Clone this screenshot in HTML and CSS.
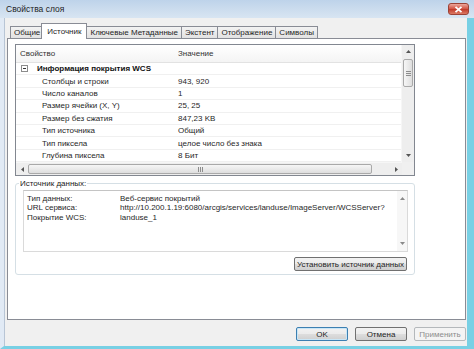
FILE: index.html
```html
<!DOCTYPE html>
<html>
<head>
  <title>Свойства слоя</title>
  <link rel="stylesheet" href="styles.css">
</head>
<body>
  <div class="window">
    <div class="titlebar">
      <span class="title">Свойства слоя</span>
      <span class="close">
        <svg width="9" height="7" viewBox="0 0 9 7"><path d="M1.5 0.8 L7.5 6.2 M7.5 0.8 L1.5 6.2" stroke="#fff" stroke-width="1.8"/></svg>
      </span>
    </div>
    <div class="frame">
      <div class="tabs">
        <div class="tab">Общие</div>
        <div class="tab active">Источник</div>
        <div class="tab">Ключевые Метаданные</div>
        <div class="tab">Экстент</div>
        <div class="tab">Отображение</div>
        <div class="tab">Символы</div>
      </div>

      <div class="panel">
        <div class="grid">
          <div class="grid-main">
            <div class="grid-view">
              <div class="grid-head">
                <span class="c1">Свойство</span>
                <span class="c2">Значение</span>
              </div>
              <div class="row group">
                <svg class="toggle" width="7" height="7" viewBox="0 0 7 7"><rect x="0.5" y="0.5" width="6" height="6" fill="#fff" stroke="#8c8c8c"/><path d="M2 3.5 H5" stroke="#333"/></svg>
                <span>Информация покрытия WCS</span>
              </div>
              <div class="row"><span class="c1">Столбцы и строки</span><span class="c2">943, 920</span></div>
              <div class="row"><span class="c1">Число каналов</span><span class="c2">1</span></div>
              <div class="row"><span class="c1">Размер ячейки (X, Y)</span><span class="c2">25, 25</span></div>
              <div class="row"><span class="c1">Размер без сжатия</span><span class="c2">847,23 KB</span></div>
              <div class="row"><span class="c1">Тип источника</span><span class="c2">Общий</span></div>
              <div class="row"><span class="c1">Тип пиксела</span><span class="c2">целое число без знака</span></div>
              <div class="row"><span class="c1">Глубина пиксела</span><span class="c2">8 Бит</span></div>
            </div>
            <div class="vscroll">
              <div class="sb-btn"><svg width="5" height="3" viewBox="0 0 5 3"><path d="M0 3 L2.5 0 L5 3Z" fill="#555"/></svg></div>
              <div class="thumb-v"><span class="grip-v"></span></div>
              <div class="sb-track"></div>
              <div class="sb-btn"><svg width="5" height="3" viewBox="0 0 5 3"><path d="M0 0 L2.5 3 L5 0Z" fill="#555"/></svg></div>
            </div>
          </div>
          <div class="hscroll-row">
            <div class="hscroll">
              <div class="sb-btn-h"><svg width="3" height="5" viewBox="0 0 3 5"><path d="M3 0 L0 2.5 L3 5Z" fill="#555"/></svg></div>
              <div class="thumb-h"><span class="grip-h"></span></div>
              <div class="sb-track"></div>
              <div class="sb-btn-h"><svg width="3" height="5" viewBox="0 0 3 5"><path d="M0 0 L3 2.5 L0 5Z" fill="#555"/></svg></div>
            </div>
            <div class="corner"></div>
          </div>
        </div>

        <fieldset class="source">
          <legend>Источник данных:</legend>
          <div class="info">
            <div class="info-lines">
              <div class="line"><span class="k">Тип данных:</span><span>Веб-сервис покрытий</span></div>
              <div class="line"><span class="k">URL сервиса:</span><span>http://10.200.1.19:6080/arcgis/services/landuse/ImageServer/WCSServer?</span></div>
              <div class="line"><span class="k">Покрытие WCS:</span><span>landuse_1</span></div>
            </div>
            <div class="info-scroll">
              <svg width="5" height="3" viewBox="0 0 5 3"><path d="M0 3 L2.5 0 L5 3Z" fill="#8a8a8a"/></svg>
              <svg width="5" height="3" viewBox="0 0 5 3"><path d="M0 0 L2.5 3 L5 0Z" fill="#8a8a8a"/></svg>
            </div>
          </div>
          <div class="source-actions">
            <button class="btn">Установить источник данных</button>
          </div>
        </fieldset>
      </div>

      <div class="dialog-buttons">
        <button class="btn default">OK</button>
        <button class="btn">Отмена</button>
        <button class="btn" disabled>Применить</button>
      </div>
    </div>
  </div>
</body>
</html>
```

FILE: styles.css
```css
body {
  margin: 0;
  font-family: "Liberation Sans", Arial, sans-serif;
  font-size: 8px;
  color: #1f1f1f;
}
.window {
  width: 474px;
  height: 349px;
  display: flex;
  flex-direction: column;
  background: #dce7f3;
}
.titlebar {
  height: 18px;
  flex: none;
  display: flex;
  align-items: center;
  justify-content: space-between;
  padding: 0 5px 0 6px;
  background: linear-gradient(#bed3ea, #d8e5f2);
}
.title {
  font-size: 8.5px;
  color: #1e1e1e;
}
.close {
  width: 21px;
  height: 12px;
  box-sizing: border-box;
  border: 1px solid #9c4236;
  border-radius: 3px;
  background: linear-gradient(#eca79c, #d35a4b 45%, #c23d2d 55%, #dc7a64);
  display: flex;
  align-items: center;
  justify-content: center;
}
.frame {
  flex: 1;
  display: flex;
  flex-direction: column;
  border-left: 4px solid #e1eaf5;
  border-right: 7px solid #78d0e4;
  border-bottom: 3px solid #78d0e4;
  background: #f0f0f0;
  box-shadow: inset 1px 0 #b8c5d5;
}

/* tabs */
.tabs {
  height: 20px;
  flex: none;
  display: flex;
  align-items: flex-end;
  padding-left: 6px;
}
.tab {
  height: 12px;
  box-sizing: border-box;
  padding: 0 3px;
  border: 1px solid #898c95;
  border-bottom: none;
  margin-right: -1px;
  background: linear-gradient(#f3f3f3, #e2e2e2);
  line-height: 11px;
  white-space: nowrap;
}
.tab.active {
  height: 16px;
  margin: 0 -1px -1px -2px;
  padding: 0 5px;
  background: #fff;
  line-height: 15px;
  position: relative;
  z-index: 1;
}

.panel {
  flex: none;
  height: 282px;
  box-sizing: border-box;
  margin: 0 1px 0 3px;
  border: 1px solid #898c95;
  background: #fff;
  padding: 5px 0 0 7px;
}

/* property grid */
.grid {
  width: 400px;
  height: 132px;
  box-sizing: border-box;
  border: 1px solid #828790;
  display: flex;
  flex-direction: column;
}
.grid-main {
  flex: 1;
  display: flex;
  min-height: 0;
}
.grid-view {
  flex: 1;
  overflow: hidden;
}
.grid-head {
  height: 18px;
  box-sizing: border-box;
  display: flex;
  align-items: center;
  background: linear-gradient(#ffffff, #f4f4f4);
  border-bottom: 1px solid #e2e2e2;
  color: #333;
}
.grid-head .c1 {
  width: 158px;
  padding-left: 4px;
  box-sizing: border-box;
}
.grid-head .c2 {
  padding-left: 4px;
}
.row {
  height: 12.4px;
  box-sizing: border-box;
  display: flex;
  align-items: center;
  border-bottom: 1px solid #f0f0f0;
  white-space: nowrap;
}
.row .c1 {
  width: 158px;
  padding-left: 26px;
  box-sizing: border-box;
}
.row .c2 {
  padding-left: 4px;
}
.row.group {
  font-weight: bold;
  color: #111;
}
.toggle {
  margin: 0 9px 0 5px;
}

/* scrollbars */
.vscroll {
  width: 12px;
  display: flex;
  flex-direction: column;
  background: #eeeeee;
  border-left: 1px solid #f6f6f6;
}
.sb-btn {
  height: 13px;
  flex: none;
  display: flex;
  align-items: center;
  justify-content: center;
}
.sb-track {
  flex: 1;
}
.thumb-v {
  height: 28px;
  margin: 1px 1px 0;
  box-sizing: border-box;
  border: 1px solid #a9a9a9;
  border-radius: 2px;
  background: linear-gradient(90deg, #f6f6f6, #dedede);
  display: flex;
  align-items: center;
  justify-content: center;
}
.grip-v {
  width: 5px;
  height: 5px;
  background: repeating-linear-gradient(#8d8d8d 0 1px, transparent 1px 2px);
}
.hscroll-row {
  height: 13px;
  flex: none;
  display: flex;
}
.hscroll {
  flex: 1;
  display: flex;
  background: #eeeeee;
  border-top: 1px solid #f6f6f6;
}
.sb-btn-h {
  width: 12px;
  flex: none;
  display: flex;
  align-items: center;
  justify-content: center;
}
.thumb-h {
  width: 344px;
  margin: 1px 0;
  box-sizing: border-box;
  border: 1px solid #a9a9a9;
  border-radius: 2px;
  background: linear-gradient(#f6f6f6, #dedede);
  display: flex;
  align-items: center;
  justify-content: center;
}
.grip-h {
  width: 5px;
  height: 5px;
  background: repeating-linear-gradient(90deg, #8d8d8d 0 1px, transparent 1px 2px);
}
.corner {
  width: 12px;
  background: #f0f0f0;
}

/* data source group */
.source {
  width: 400px;
  box-sizing: border-box;
  margin: 3px 0 0;
  padding: 0 6px 3px 7px;
  border: 1px solid #d5dfe5;
  border-radius: 3px;
}
.source legend {
  padding: 0 1px;
  margin-left: -4px;
  color: #222;
}
.info {
  height: 62px;
  box-sizing: border-box;
  margin-top: 2px;
  border: 1px solid #dadada;
  border-top-color: #c4c4c4;
  display: flex;
}
.info-lines {
  flex: 1;
  padding: 3px 0 0 3px;
}
.line {
  display: flex;
  line-height: 9.3px;
  white-space: nowrap;
}
.line .k {
  width: 93px;
  flex: none;
}
.info-scroll {
  width: 10px;
  display: flex;
  flex-direction: column;
  align-items: center;
  justify-content: space-between;
  padding: 6px 0 6px;
  background: #f7f7f7;
}
.source-actions {
  display: flex;
  justify-content: flex-end;
  margin-top: 5px;
  padding-right: 1px;
}

/* buttons */
.btn {
  height: 14px;
  box-sizing: border-box;
  padding: 0 2px;
  font-family: "Liberation Sans", Arial, sans-serif;
  font-size: 8px;
  color: #1f1f1f;
  border: 1px solid #707070;
  border-radius: 2px;
  background: linear-gradient(#f2f2f2, #ebebeb 50%, #dddddd 51%, #cfcfcf);
}
.btn.default {
  border-color: #3c7fb1;
  box-shadow: inset 0 0 0 1px #c8e6f7;
}
.btn:disabled {
  border-color: #b4b8bb;
  background: #f4f4f4;
  color: #8d8d8d;
}
.dialog-buttons {
  display: flex;
  justify-content: flex-end;
  gap: 7px;
  padding: 7px 1px 0 0;
}
.dialog-buttons .btn {
  width: 52px;
}
```
